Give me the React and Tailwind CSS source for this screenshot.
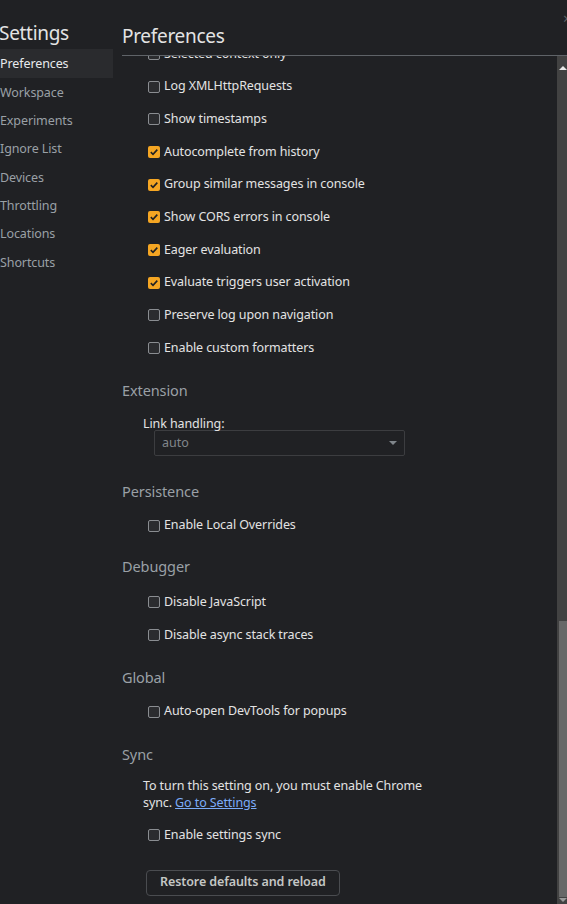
// DevTools settings panel — dark theme, Preferences tab scrolled down

const NAV = ["Preferences", "Workspace", "Experiments", "Ignore List", "Devices", "Throttling", "Locations", "Shortcuts"];

function Check({ checked, label }) {
  return (
    <div className="flex items-center h-[32.67px] pl-[26px] gap-[4px]">
      {checked ? (
        <span className="w-[12px] h-[12px] rounded-[2px] bg-[#f5a623] flex items-center justify-center">
          <svg width="10" height="10" viewBox="0 0 10 10">
            <path d="M1.8 5.2 L4 7.3 L8.3 2.6" fill="none" stroke="#202124" strokeWidth="1.6" />
          </svg>
        </span>
      ) : (
        <span className="w-[12px] h-[12px] rounded-[2px] border border-[#8a8d91] bg-[#2b2c2f]" />
      )}
      <span className="text-[12.5px] tracking-[-0.1px] text-[#e3e3e3]">{label}</span>
    </div>
  );
}

function Section({ title, top = "mt-[15px]", children }) {
  return (
    <div className={top}>
      <div className="h-[24px] flex items-center text-[14.5px] tracking-[-0.1px] text-[#9aa0a6]">{title}</div>
      <div className="mt-[5px]">{children}</div>
    </div>
  );
}

export default function App() {
  return (
    <div
      className="w-[567px] h-[904px] bg-[#202124] flex overflow-hidden text-[#e3e3e3]"
      style={{ fontFamily: "'Noto Sans', 'Open Sans', sans-serif" }}
    >
      {/* Sidebar */}
      <div className="w-[113px] shrink-0 flex flex-col">
        <div className="h-[49px] flex items-center text-[19px] tracking-[-0.3px] text-[#e3e3e3] -ml-[1px] pt-[18px]">Settings</div>
        {NAV.map((n, i) => (
          <div
            key={n}
            className={`flex items-center pt-[2px] text-[12.5px] tracking-[-0.1px] ${i === 0 ? "bg-[#2a2b2e] text-[#e8eaed] h-[29px]" : "h-[28.3px] text-[#9aa0a6]"}`}
          >
            {n}
          </div>
        ))}
      </div>

      {/* Main */}
      <div className="flex-1 flex flex-col pl-[9px] min-w-0">
        <div className="h-[55px] flex items-center relative pt-[18px]">
          <span className="text-[19px] tracking-[-0.3px] text-[#e3e3e3]">Preferences</span>
          <span className="absolute right-[-4px] top-[8px] text-[14px] text-[#5f6368]">×</span>
        </div>
        <div className="flex-1 flex border-t border-[#5f6368] min-h-0">
          <div className="flex-1 overflow-hidden">
            <div className="-mt-[18.3px]">
              <Check label="Selected context only" />
              <Check label="Log XMLHttpRequests" />
              <Check label="Show timestamps" />
              <Check checked label="Autocomplete from history" />
              <Check checked label="Group similar messages in console" />
              <Check checked label="Show CORS errors in console" />
              <Check checked label="Eager evaluation" />
              <Check checked label="Evaluate triggers user activation" />
              <Check label="Preserve log upon navigation" />
              <Check label="Enable custom formatters" />

              <Section title="Extension">
                <div className="pl-[21px] mt-[13px] text-[12.5px] tracking-[-0.1px] text-[#e3e3e3] leading-[16px]">Link handling:</div>
                <div className="ml-[32px] -mt-[2px] w-[251px] h-[26px] border border-[#3c3d40] rounded-[2px] flex items-center justify-between px-[7px]">
                  <span className="text-[12.5px] text-[#80868b]">auto</span>
                  <svg width="8" height="5" viewBox="0 0 8 5"><path d="M0 0 H8 L4 4 Z" fill="#80868b" /></svg>
                </div>
              </Section>

              <Section title="Persistence" top="mt-[24px]">
                <Check label="Enable Local Overrides" />
              </Section>

              <Section title="Debugger" top="mt-[13px]">
                <div className="pt-[2px]">
                  <Check label="Disable JavaScript" />
                  <Check label="Disable async stack traces" />
                </div>
              </Section>

              <Section title="Global">
                <Check label="Auto-open DevTools for popups" />
              </Section>

              <Section title="Sync">
                <p className="pl-[21px] mt-[10px] w-[310px] text-[12.5px] tracking-[-0.1px] leading-[17px] text-[#e3e3e3]">
                  To turn this setting on, you must enable Chrome sync.{" "}
                  <span className="text-[#7cacf8] underline">Go to Settings</span>
                </p>
                <div className="mt-[8px]">
                  <Check label="Enable settings sync" />
                </div>
                <button className="ml-[24px] mt-[18px] h-[26px] px-[13px] border border-[#4a4c50] rounded-[4px] text-[12.5px] tracking-[-0.1px] font-semibold text-[#c4c7c5]">
                  Restore defaults and reload
                </button>
              </Section>
            </div>
          </div>

          {/* Scrollbar */}
          <div className="w-[10px] shrink-0 bg-[#424242] flex flex-col items-end">
            <svg width="8" height="14" viewBox="0 0 8 14" className="mt-[6px]"><path d="M4 4 L8 8 H0 Z" fill="#e8e8e8" /></svg>
            <div className="flex-1" />
            <div className="w-[8px] h-[276px] bg-[#686868]" />
            <svg width="8" height="7" viewBox="0 0 8 7"><path d="M0 1 H8 L4 5 Z" fill="#9a9a9a" /></svg>
          </div>
        </div>
      </div>
    </div>
  );
}
